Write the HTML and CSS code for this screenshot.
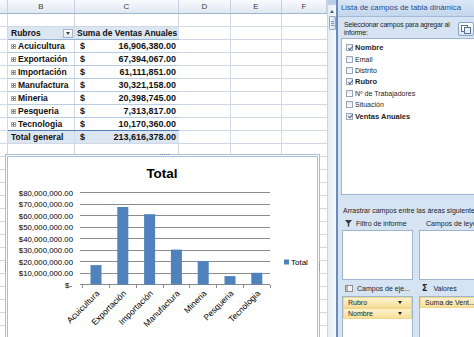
FILE: index.html
```html
<!DOCTYPE html>
<html lang="es">
<head>
    <meta charset="UTF-8">
    <meta name="viewport" content="width=device-width, initial-scale=1.0">
    <title>Tabla dinámica - Ventas Anuales</title>
    <link rel="stylesheet" href="styles.css">
</head>
<body>
<div class="workbook">
    <div class="sheet">
        <div class="col-heads">
            <div></div><div class="head-b">B</div><div>C</div><div>D</div><div>E</div><div>F</div>
        </div>
        <div class="cells">
            <div class="pivot">
                <div class="pv-row pv-head">
                    <div class="pv-label">Rubros <span class="filter-btn"></span></div>
                    <div class="pv-value">Suma de Ventas Anuales</div>
                </div>
                <div class="pv-row">
                    <div class="pv-label"><span class="expand"></span>Acuicultura</div>
                    <div class="pv-value"><span>$</span><span>16,906,380.00</span></div>
                </div>
                <div class="pv-row">
                    <div class="pv-label"><span class="expand"></span>Exportación</div>
                    <div class="pv-value"><span>$</span><span>67,394,067.00</span></div>
                </div>
                <div class="pv-row">
                    <div class="pv-label"><span class="expand"></span>Importación</div>
                    <div class="pv-value"><span>$</span><span>61,111,851.00</span></div>
                </div>
                <div class="pv-row">
                    <div class="pv-label"><span class="expand"></span>Manufactura</div>
                    <div class="pv-value"><span>$</span><span>30,321,158.00</span></div>
                </div>
                <div class="pv-row">
                    <div class="pv-label"><span class="expand"></span>Mineria</div>
                    <div class="pv-value"><span>$</span><span>20,398,745.00</span></div>
                </div>
                <div class="pv-row">
                    <div class="pv-label"><span class="expand"></span>Pesqueria</div>
                    <div class="pv-value"><span>$</span><span>7,313,817.00</span></div>
                </div>
                <div class="pv-row pv-last">
                    <div class="pv-label"><span class="expand"></span>Tecnologia</div>
                    <div class="pv-value"><span>$</span><span>10,170,360.00</span></div>
                </div>
                <div class="pv-row pv-total">
                    <div class="pv-label">Total general</div>
                    <div class="pv-value"><span>$</span><span>213,616,378.00</span></div>
                </div>
            </div>
        </div>

        <!-- chart object floating over the cells -->
        <div class="chart">
            <span class="grip grip-top"></span>
            <span class="grip grip-left"></span>
            <span class="grip grip-right"></span>
            <svg class="chart-svg" width="309" height="200" viewBox="8 157 309 200">
                <text class="chart-title" x="162" y="178" text-anchor="middle">Total</text>
                <g class="grid-lines">
                    <line x1="80" x2="270" y1="192.5" y2="192.5"/>
                    <line x1="80" x2="270" y1="204" y2="204"/>
                    <line x1="80" x2="270" y1="215.5" y2="215.5"/>
                    <line x1="80" x2="270" y1="227" y2="227"/>
                    <line x1="80" x2="270" y1="238.5" y2="238.5"/>
                    <line x1="80" x2="270" y1="250" y2="250"/>
                    <line x1="80" x2="270" y1="261.5" y2="261.5"/>
                    <line x1="80" x2="270" y1="273" y2="273"/>
                    <line x1="80" x2="270" y1="284.5" y2="284.5"/>
                </g>
                <g class="axis-labels" text-anchor="end">
                    <text x="73" y="195.5">$80,000,000.00</text>
                    <text x="73" y="207">$70,000,000.00</text>
                    <text x="73" y="218.5">$60,000,000.00</text>
                    <text x="73" y="230">$50,000,000.00</text>
                    <text x="73" y="241.5">$40,000,000.00</text>
                    <text x="73" y="253">$30,000,000.00</text>
                    <text x="73" y="264.5">$20,000,000.00</text>
                    <text x="73" y="276">$10,000,000.00</text>
                    <text x="72" y="287.5">$-</text>
                </g>
                <g class="bars">
                    <rect x="90.5" y="265.1" width="11" height="19.4"/>
                    <rect x="117.3" y="207" width="11" height="77.5"/>
                    <rect x="144.1" y="214.2" width="11" height="70.3"/>
                    <rect x="170.9" y="249.6" width="11" height="34.9"/>
                    <rect x="197.7" y="261" width="11" height="23.5"/>
                    <rect x="224.5" y="276.1" width="11" height="8.4"/>
                    <rect x="251.3" y="272.8" width="11" height="11.7"/>
                </g>
                <g class="ticks">
                    <line x1="82.6" x2="82.6" y1="284.5" y2="288"/>
                    <line x1="109.4" x2="109.4" y1="284.5" y2="288"/>
                    <line x1="136.2" x2="136.2" y1="284.5" y2="288"/>
                    <line x1="163" x2="163" y1="284.5" y2="288"/>
                    <line x1="189.8" x2="189.8" y1="284.5" y2="288"/>
                    <line x1="216.6" x2="216.6" y1="284.5" y2="288"/>
                    <line x1="243.4" x2="243.4" y1="284.5" y2="288"/>
                    <line x1="270.2" x2="270.2" y1="284.5" y2="288"/>
                </g>
                <g class="cat-labels" text-anchor="end">
                    <text x="100" y="294" transform="rotate(-45 100 294)">Acuicultura</text>
                    <text x="126.8" y="294" transform="rotate(-45 126.8 294)">Exportación</text>
                    <text x="153.6" y="294" transform="rotate(-45 153.6 294)">Importación</text>
                    <text x="180.4" y="294" transform="rotate(-45 180.4 294)">Manufactura</text>
                    <text x="207.2" y="294" transform="rotate(-45 207.2 294)">Mineria</text>
                    <text x="234" y="294" transform="rotate(-45 234 294)">Pesqueria</text>
                    <text x="260.8" y="294" transform="rotate(-45 260.8 294)">Tecnologia</text>
                </g>
                <rect class="legend-key" x="284" y="259.5" width="5" height="5"/>
                <text class="legend-text" x="291" y="265">Total</text>
            </svg>
        </div>
    </div>

    <div class="vscroll">
        <span class="split"></span>
        <span class="up"></span>
        <span class="thumb"></span>
    </div>

    <aside class="panel">
        <div class="panel-title">Lista de campos de tabla dinámica</div>
        <div class="panel-body">
            <div class="choose">
                <p>Seleccionar campos para agregar al informe:</p>
                <button class="layout-btn" type="button">
                    <svg width="10" height="9" viewBox="0 0 10 9">
                        <rect x="0.5" y="0.5" width="6" height="6" fill="#fff" stroke="#5b6f8f"/>
                        <rect x="3.5" y="2.5" width="6" height="6" fill="#e9eef6" stroke="#5b6f8f"/>
                    </svg>
                </button>
            </div>
            <ul class="field-list">
                <li class="checked"><span class="check"></span>Nombre</li>
                <li><span class="check"></span>Email</li>
                <li><span class="check"></span>Distrito</li>
                <li class="checked"><span class="check"></span>Rubro</li>
                <li><span class="check"></span>Nº de Trabajadores</li>
                <li><span class="check"></span>Situación</li>
                <li class="checked"><span class="check"></span>Ventas Anuales</li>
            </ul>
            <p class="hint">Arrastrar campos entre las áreas siguientes:</p>
            <div class="areas">
                <div class="area-label">
                    <svg width="7" height="7" viewBox="0 0 7 7"><path d="M0 0H7L4.2 3.4V7L2.8 6V3.4Z" fill="#3b3b3b"/></svg>
                    Filtro de informe
                </div>
                <div class="area-label">
                    <svg width="9" height="7" viewBox="0 0 9 7"><rect x="0.5" y="0.5" width="8" height="6" fill="#f3f3f3" stroke="#8f8f8f"/><rect x="1" y="1" width="7" height="2" fill="#b4b4b4"/></svg>
                    Campos de leyenda (serie)
                </div>
                <div class="area-box"></div>
                <div class="area-box"></div>
                <div class="area-label">
                    <svg width="8" height="7" viewBox="0 0 8 7"><rect x="0.5" y="0.5" width="7" height="6" fill="#f3f3f3" stroke="#8f8f8f"/><rect x="1" y="1" width="2" height="5" fill="#b4b4b4"/></svg>
                    Campos de eje...
                </div>
                <div class="area-label"><span class="sigma">Σ</span>Valores</div>
                <div class="area-box">
                    <div class="chip">Rubro <span class="caret"></span></div>
                    <div class="chip">Nombre <span class="caret"></span></div>
                </div>
                <div class="area-box">
                    <div class="chip">Suma de Vent...</div>
                </div>
            </div>
        </div>
    </aside>
</div>
</body>
</html>
```

FILE: styles.css
```css
* {
    box-sizing: border-box;
}
body {
    margin: 0;
    font-family: "Liberation Sans", Arial, sans-serif;
    background: #fff;
    overflow: hidden;
}
.workbook {
    display: flex;
    width: 474px;
    height: 337px;
    overflow: hidden;
}

/* spreadsheet */
.sheet {
    position: relative;
    width: 327px;
    flex: none;
    overflow: hidden;
}
.col-heads {
    display: grid;
    grid-template-columns: 8px 67px 104px 52px 51px 45px;
    height: 14px;
    background: linear-gradient(#f8fafd, #e1e8f2);
    border-bottom: 1px solid #9eb6ce;
}
.col-heads div {
    border-right: 1px solid #c5d1e0;
    font-size: 8px;
    line-height: 13px;
    color: #3c3c3c;
    text-align: center;
}
.cells {
    height: 323px;
    background:
        linear-gradient(#d0d7e5, #d0d7e5) 7px 0 / 1px 100% no-repeat,
        linear-gradient(#d0d7e5, #d0d7e5) 74px 0 / 1px 100% no-repeat,
        linear-gradient(#d0d7e5, #d0d7e5) 178px 0 / 1px 100% no-repeat,
        linear-gradient(#d0d7e5, #d0d7e5) 230px 0 / 1px 100% no-repeat,
        linear-gradient(#d0d7e5, #d0d7e5) 281px 0 / 1px 100% no-repeat,
        repeating-linear-gradient(to bottom, transparent 0 12px, #d0d7e5 12px 13px);
    padding: 13px 0 0 8px;
}
.pivot {
    width: 171px;
    background: #fff;
}
.pv-row {
    display: grid;
    grid-template-columns: 67px 104px;
    height: 13px;
    border-bottom: 1px solid #b8cce4;
    font-size: 8.5px;
    font-weight: bold;
    line-height: 12px;
    color: #111;
}
.pv-label {
    display: flex;
    align-items: center;
    padding-left: 3px;
    border-right: 1px solid #d0d7e5;
    white-space: nowrap;
}
.pv-value {
    display: flex;
    justify-content: space-between;
    padding: 0 3px 0 5px;
    font-size: 9px;
    white-space: nowrap;
}
.pv-head {
    background: #dce6f1;
    border-bottom-color: #95b3d7;
}
.pv-head .pv-value {
    padding-left: 2px;
    font-size: 8.5px;
}
.pv-last {
    border-bottom-color: #4f81bd;
}
.pv-total {
    background: #dce6f1;
    border-bottom-color: #d0d7e5;
}
.filter-btn {
    position: relative;
    width: 10px;
    height: 9px;
    margin: 0 1px 0 auto;
    border: 1px solid #a5b4c8;
    background: linear-gradient(#fff, #e4e9f0);
}
.filter-btn::after {
    content: "";
    position: absolute;
    left: 2px;
    top: 2px;
    border-left: 2.5px solid transparent;
    border-right: 2.5px solid transparent;
    border-top: 3px solid #444;
}
.expand {
    position: relative;
    width: 5px;
    height: 5px;
    margin-right: 2px;
    border: 1px solid #a3a3a3;
    flex: none;
}
.expand::before,
.expand::after {
    content: "";
    position: absolute;
    background: #777;
}
.expand::before {
    left: 0;
    top: 1px;
    width: 3px;
    height: 1px;
}
.expand::after {
    left: 1px;
    top: 0;
    width: 1px;
    height: 3px;
}

/* chart object */
.chart {
    position: absolute;
    left: 5px;
    top: 154px;
    width: 315px;
    height: 206px;
    border: 3px double #aabdd6;
    background: #fff;
}
.chart-svg {
    display: block;
}
.chart-svg text {
    font-family: "Liberation Sans", Arial, sans-serif;
    fill: #000;
}
.chart-title {
    font-size: 13.5px;
    font-weight: bold;
}
.grid-lines line,
.ticks line {
    stroke: #8c8c8c;
    stroke-width: 1;
    shape-rendering: crispEdges;
}
.axis-labels text {
    font-size: 7.8px;
}
.cat-labels text {
    font-size: 8.5px;
}
.bars rect,
.legend-key {
    fill: #4f81bd;
}
.legend-text {
    font-size: 8px;
}
.grip {
    position: absolute;
}
.grip-top {
    top: -3px;
    left: 152px;
    width: 9px;
    border-top: 1px dotted #6f86a8;
}
.grip-left {
    left: -3px;
    top: 105px;
    height: 9px;
    border-left: 1px dotted #6f86a8;
}
.grip-right {
    right: -3px;
    top: 105px;
    height: 9px;
    border-right: 1px dotted #6f86a8;
}

/* vertical scrollbar */
.vscroll {
    display: flex;
    flex-direction: column;
    align-items: center;
    width: 9px;
    flex: none;
    background: linear-gradient(to right, #e6edf7, #f5f8fc);
    border-left: 1px solid #c8d5e7;
}
.split {
    width: 100%;
    height: 5px;
    background: #bccfe7;
}
.up {
    margin-top: 5px;
    border-left: 2.5px solid transparent;
    border-right: 2.5px solid transparent;
    border-bottom: 3px solid #3d5b8a;
}
.thumb {
    margin-top: 3px;
    width: 7px;
    height: 14px;
    border: 1px solid #8fa8ca;
    border-radius: 1px;
    background:
        repeating-linear-gradient(#7d94b6 0 1px, transparent 1px 2px) 1px 4px / 3px 5px no-repeat,
        linear-gradient(to right, #f7f9fd, #cbdaee);
}

/* pivot field list */
.panel {
    flex: 1;
    border-left: 2px solid #6b8cba;
    background: #d6e3f3;
    overflow: hidden;
    font-size: 7px;
    color: #1e1e1e;
}
.panel-title {
    height: 17px;
    padding-left: 3px;
    border-bottom: 1px solid #a5bad6;
    background: linear-gradient(#dbe7f6, #c3d6ee);
    color: #1f4e8c;
    font-size: 7.8px;
    line-height: 16px;
    white-space: nowrap;
}
.panel-body {
    width: 160px;
    padding-left: 3px;
}
.choose {
    display: flex;
    align-items: flex-start;
    padding-top: 4px;
}
.choose p {
    width: 112px;
    margin: 0 0 0 3px;
    font-size: 7px;
    letter-spacing: -0.2px;
    line-height: 8px;
}
.layout-btn {
    width: 16px;
    height: 14px;
    margin: 1px 0 0 2px;
    padding: 0;
    border: 1px solid #8aa3c4;
    border-radius: 2px;
    background: linear-gradient(#fdfeff, #d9e5f3);
    display: flex;
    align-items: center;
    justify-content: center;
}
.field-list {
    list-style: none;
    margin: 1px 0 0;
    padding: 3px 0 0 4px;
    width: 150px;
    height: 157px;
    background: #fff;
    border: 1px solid #9fb4d0;
}
.field-list li {
    display: flex;
    align-items: center;
    height: 11.4px;
    white-space: nowrap;
}
.field-list li.checked {
    font-weight: bold;
    font-size: 7.5px;
}
.check {
    position: relative;
    width: 7px;
    height: 7px;
    margin-right: 2px;
    border: 1px solid #98a6ba;
    background: linear-gradient(#e6eaf0, #fff);
    flex: none;
}
.checked .check::after {
    content: "";
    position: absolute;
    left: 1.5px;
    top: -0.5px;
    width: 2px;
    height: 4px;
    border-right: 1px solid #50637f;
    border-bottom: 1px solid #50637f;
    transform: rotate(40deg);
}
.hint {
    margin: 11px 0 0 2px;
    line-height: 10px;
    white-space: nowrap;
}
.areas {
    display: grid;
    grid-template-columns: 71px 71px;
    grid-template-rows: 13px 50px 16px 50px;
    column-gap: 6px;
    margin: 1px 0 0 1px;
}
.area-label {
    display: flex;
    align-items: center;
    gap: 4px;
    padding-left: 3px;
    white-space: nowrap;
}
.sigma {
    font-weight: bold;
    font-size: 8px;
    font-family: "DejaVu Sans", sans-serif;
    margin-right: 2px;
}
.area-box {
    background: #fff;
    border: 1px solid #9fb4d0;
    padding: 0;
}
.chip {
    display: flex;
    align-items: center;
    height: 11px;
    padding-left: 4px;
    margin-bottom: 0;
    background: linear-gradient(#fdf2cf, #f8df99);
    border: 1px solid #f0d78c;
    white-space: nowrap;
}
.caret {
    margin: 0 9px 0 auto;
    border-left: 2.5px solid transparent;
    border-right: 2.5px solid transparent;
    border-top: 3px solid #222;
}
```
